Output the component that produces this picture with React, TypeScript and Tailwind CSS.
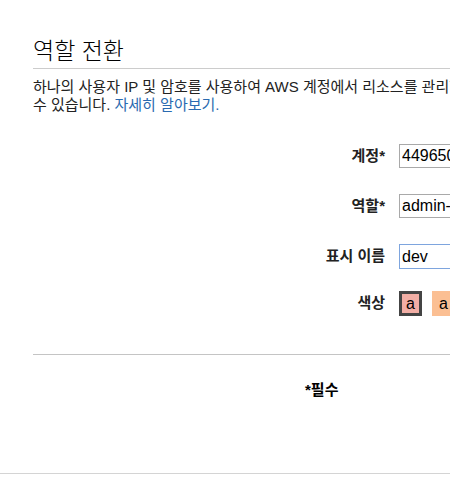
const font = { fontFamily: '"Liberation Sans", "Noto Sans CJK KR", sans-serif' }

const swatches = [
  { fill: 'bg-[#f2aea5]', selected: true },
  { fill: 'bg-[#fbbf93]', selected: false },
  { fill: 'bg-[#fde18f]', selected: false },
  { fill: 'bg-[#c9e7a6]', selected: false },
]

function Row({ label, children }: { label: string; children: React.ReactNode }) {
  return (
    <div className="flex items-center">
      <label className="w-[366px] shrink-0 text-right text-[15px] font-bold text-[#222] pr-[14px]">{label}</label>
      {children}
    </div>
  )
}

export default function App() {
  return (
    <div className="w-[450px] h-[486px] overflow-hidden bg-white text-black" style={font}>
      <div className="w-[820px] pl-[33px] pt-[36px]">
        <h2 className="text-[23px] font-light leading-[30px] pb-[2px] border-b border-[#cccccc]">역할 전환</h2>
        <p className="mt-[9px] text-[15px] leading-[18px] text-[#222]">
          하나의 사용자 IP 및 암호를 사용하여 AWS 계정에서 리소스를 관리할
          <br />
          수 있습니다. <a href="#" className="text-[#2a6ab0]">자세히 알아보기.</a>
        </p>

        <div className="mt-[30px] flex flex-col gap-[26px]">
          <Row label="계정*">
            <input readOnly value="449650123456" className="w-[260px] h-[24px] px-[2px] text-[16px] border border-[#a9a9a9] outline-none" style={font} />
          </Row>
          <Row label="역할*">
            <input readOnly value="admin-role" className="w-[260px] h-[24px] px-[2px] text-[16px] border border-[#a9a9a9] outline-none" style={font} />
          </Row>
          <Row label="표시 이름">
            <input readOnly value="dev" className="w-[260px] h-[25px] px-[2px] text-[16px] border border-[#7ea5de] outline-none" style={font} />
          </Row>
          <div className="-mt-[4px]">
            <Row label="색상">
              <div className="flex gap-[10px]">
                {swatches.map((s, i) => (
                  <span
                    key={i}
                    className={`w-[23px] h-[25px] flex items-center justify-center text-[16px] ${s.fill} ${s.selected ? 'border-[3px] border-[#444]' : ''}`}
                  >
                    a
                  </span>
                ))}
              </div>
            </Row>
          </div>
        </div>

        <div className="mt-[38px] border-t border-[#c4c4c4]" />
        <p className="mt-[24px] pl-[272px] text-[15px] font-bold">*필수</p>
      </div>
      <div className="mt-[71px] border-t border-[#d4d4d4]" />
    </div>
  )
}
